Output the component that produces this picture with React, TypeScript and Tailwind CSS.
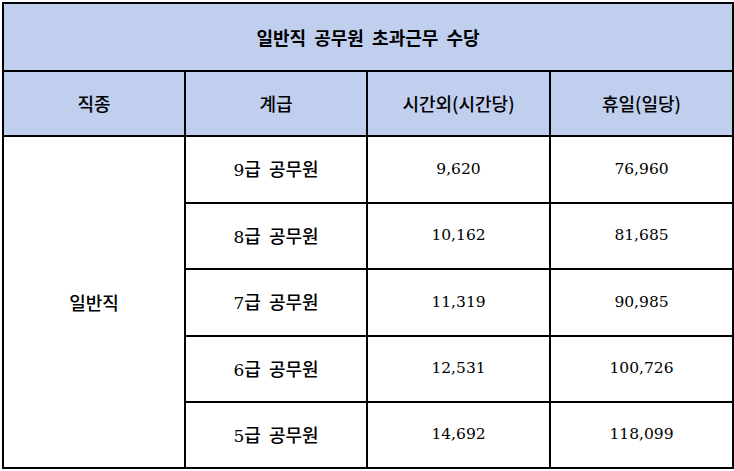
const rows = [
  { no: "9", overtime: "9,620", holiday: "76,960", h: "h-[67px]" },
  { no: "8", overtime: "10,162", holiday: "81,685", h: "h-[66px]" },
  { no: "7", overtime: "11,319", holiday: "90,985", h: "h-[67px]" },
  { no: "6", overtime: "12,531", holiday: "100,726", h: "h-[66px]" },
  { no: "5", overtime: "14,692", holiday: "118,099", h: "h-[66px]" },
];

export default function App() {
  return (
    <div className="w-[734px] h-[471px] bg-white pl-[2px] pt-[2px] font-['Noto_Sans_CJK_KR',sans-serif] text-[18px] text-black">
      <table className="w-[730px] border-collapse table-fixed">
        <colgroup>
          <col className="w-[182px]" />
          <col className="w-[182px]" />
          <col className="w-[183px]" />
          <col className="w-[183px]" />
        </colgroup>
        <thead>
          <tr className="h-[68px] bg-[#c1cfef]">
            <th colSpan={4} className="border-2 border-black text-center font-bold whitespace-pre">
              {"일반직  공무원  초과근무  수당"}
            </th>
          </tr>
          <tr className="h-[65px] bg-[#c1cfef]">
            <th className="border-2 border-black font-medium">직종</th>
            <th className="border-2 border-black font-medium">계급</th>
            <th className="border-2 border-black font-medium">시간외(시간당)</th>
            <th className="border-2 border-black font-medium">휴일(일당)</th>
          </tr>
        </thead>
        <tbody>
          {rows.map((r, i) => (
            <tr key={r.no} className={r.h}>
              {i === 0 && (
                <td rowSpan={5} className="border-2 border-black text-center font-medium">
                  일반직
                </td>
              )}
              <td className="border-2 border-black text-center whitespace-pre font-medium">
                <span className="font-['DejaVu_Serif',serif] font-normal text-[17px]">{r.no}</span>
                {"급  공무원"}
              </td>
              <td className="border-2 border-black text-center font-['DejaVu_Serif',serif] text-[15.5px]">
                {r.overtime}
              </td>
              <td className="border-2 border-black text-center font-['DejaVu_Serif',serif] text-[15.5px]">
                {r.holiday}
              </td>
            </tr>
          ))}
        </tbody>
      </table>
    </div>
  );
}
